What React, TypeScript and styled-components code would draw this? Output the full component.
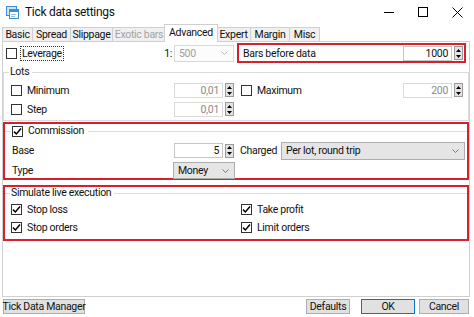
import React, { FC, ReactNode } from 'react'
import styled, { createGlobalStyle } from 'styled-components'

const GlobalStyle = createGlobalStyle`
  html, body {
    margin: 0;
    padding: 0;
    background: #ffffff;
  }
  body {
    font-family: Roboto, 'Noto Sans', sans-serif;
    font-size: 10.5px;
    letter-spacing: -0.3px;
    color: #111111;
  }
`

// window chrome
const Window = styled('div')`
  width: 474px;
  height: 317px;
  overflow: hidden;
  display: flex;
  flex-direction: column;
  background: #ffffff;
`
const TitleBar = styled('div')`
  height: 24px;
  display: flex;
  align-items: center;
  padding-left: 6px;
`
const TitleText = styled('span')`
  margin-left: 6px;
  font-size: 12px;
  flex-grow: 1;
`
const Controls = styled('div')`
  display: flex;
  height: 24px;
`
const ControlButton = styled('div')`
  width: 34px;
  height: 24px;
  display: flex;
  align-items: center;
  justify-content: center;
`

// tabs
const TabStrip = styled('div')`
  height: 17px;
  display: flex;
  align-items: flex-end;
  padding-left: 3px;
`
const Tab = styled('div')<{ $width: number; $active?: boolean; $disabled?: boolean }>`
  width: ${(p) => p.$width}px;
  box-sizing: border-box;
  height: ${(p) => (p.$active ? 18 : 14)}px;
  line-height: ${(p) => (p.$active ? 16 : 13)}px;
  text-align: center;
  margin: 0 ${(p) => (p.$active ? -1 : 0)}px -${(p) => (p.$active ? 1 : 0)}px;
  margin-left: ${(p) => (p.$active ? -2 : -1)}px;
  border: 1px solid #d0d0d0;
  border-bottom: none;
  background: ${(p) => (p.$active ? '#ffffff' : '#f0f0f0')};
  color: ${(p) => (p.$disabled ? '#a3a3a3' : '#111111')};
  position: relative;
  z-index: ${(p) => (p.$active ? 1 : 0)};
  white-space: nowrap;
`
const Panel = styled('div')`
  margin: 0 4px 0 2px;
  height: 256px;
  border: 1px solid #d0d0d0;
  display: flex;
  flex-direction: column;
  box-sizing: border-box;
`

// rows and cells
const TopRow = styled('div')`
  display: flex;
  align-items: center;
  height: 20px;
  margin-top: 1px;
`
const Cell = styled('div')<{ $width: number; $pad?: number }>`
  width: ${(p) => p.$width}px;
  flex-shrink: 0;
  box-sizing: border-box;
  padding-left: ${(p) => p.$pad || 0}px;
  display: flex;
  align-items: center;
`
const Push = styled('div')`
  flex-grow: 1;
`
const Highlight = styled('div')<{ $height: number }>`
  border: 2px solid #d8202c;
  height: ${(p) => p.$height}px;
  box-sizing: border-box;
  display: flex;
  flex-direction: column;
`
const Group = styled('fieldset')<{ $full?: boolean }>`
  margin: 0;
  padding: 0 0 0 6px;
  min-inline-size: 0;
  border: solid #dcdcdc;
  border-width: ${(p) => (p.$full ? '1px' : '1px 0 0 0')};
  display: flex;
  flex-direction: column;
`
const Legend = styled('legend')<{ $left: number }>`
  padding: 0 3px 0 1px;
  margin-left: ${(p) => p.$left}px;
  height: 12px;
  line-height: 12px;
  display: flex;
  align-items: center;
`
const Row = styled('div')<{ $height: number }>`
  display: flex;
  align-items: center;
  height: ${(p) => p.$height}px;
`
const Label = styled('span')<{ $dotted?: boolean }>`
  white-space: nowrap;
  outline: ${(p) => (p.$dotted ? '1px dotted #333' : 'none')};
  padding: 0 1px;
`

// controls
const Box = styled('span')`
  width: 11px;
  height: 11px;
  border: 1px solid #333333;
  box-sizing: border-box;
  background: #ffffff;
  margin-right: 4px;
  display: inline-flex;
  align-items: center;
  justify-content: center;
  flex-shrink: 0;
`
const CheckWrap = styled('span')`
  display: inline-flex;
  align-items: center;
`
const NumField = styled('div')<{ $width: number; $disabled?: boolean }>`
  width: ${(p) => p.$width}px;
  height: 15px;
  box-sizing: border-box;
  border: 1px solid ${(p) => (p.$disabled ? '#dadada' : '#c6c6c6')};
  background: #ffffff;
  color: ${(p) => (p.$disabled ? '#8a8a8a' : '#111111')};
  text-align: right;
  padding-right: 3px;
  line-height: 13px;
`
const Spin = styled('div')`
  width: 9px;
  height: 14px;
  margin-left: 2px;
  border: 1px solid #9a9a9a;
  box-sizing: border-box;
  background: #e3e3e3;
  display: flex;
  flex-direction: column;
  align-items: center;
  justify-content: space-around;
`
const Combo = styled('div')<{ $width: number; $disabled?: boolean }>`
  width: ${(p) => p.$width}px;
  flex-shrink: 0;
  height: 17px;
  box-sizing: border-box;
  border: 1px solid ${(p) => (p.$disabled ? '#d9d9d9' : '#adadad')};
  background: ${(p) => (p.$disabled ? '#fcfcfc' : '#e5e5e5')};
  color: ${(p) => (p.$disabled ? '#a0a0a0' : '#111111')};
  display: flex;
  align-items: center;
  padding: 0 5px 0 4px;
`
const ComboText = styled('span')`
  flex-grow: 1;
  white-space: nowrap;
`
const Footer = styled('div')`
  display: flex;
  align-items: center;
  padding: 2px 0 0 3px;
`
const Button = styled('div')<{ $width: number; $default?: boolean; $gap?: number }>`
  width: ${(p) => p.$width}px;
  height: 15px;
  box-sizing: border-box;
  margin-left: ${(p) => p.$gap || 0}px;
  border: 1px solid ${(p) => (p.$default ? '#0078d7' : '#adadad')};
  background: #e1e1e1;
  display: flex;
  align-items: center;
  justify-content: center;
  white-space: nowrap;
`

const Check: FC<{ checked?: boolean; children: ReactNode; dotted?: boolean }> = ({
  checked,
  children,
  dotted,
}) => (
  <CheckWrap>
    <Box>
      {checked && (
        <svg width="9" height="9" viewBox="0 0 9 9">
          <path d="M1 4.6 L3.4 7 L8 1.6" fill="none" stroke="#000" strokeWidth="1.5" />
        </svg>
      )}
    </Box>
    <Label $dotted={dotted}>{children}</Label>
  </CheckWrap>
)

const Spinner = () => (
  <Spin>
    <svg width="5" height="3" viewBox="0 0 5 3">
      <path d="M0 3 L2.5 0 L5 3 Z" fill="#000" />
    </svg>
    <svg width="5" height="3" viewBox="0 0 5 3">
      <path d="M0 0 L2.5 3 L5 0 Z" fill="#000" />
    </svg>
  </Spin>
)

const Chevron: FC<{ color: string }> = ({ color }) => (
  <svg width="7" height="4" viewBox="0 0 7 4">
    <path d="M0.5 0.5 L3.5 3.5 L6.5 0.5" fill="none" stroke={color} strokeWidth="1" />
  </svg>
)

const tabs = [
  { name: 'Basic', width: 31 },
  { name: 'Spread', width: 39 },
  { name: 'Slippage', width: 43 },
  { name: 'Exotic bars', width: 54, disabled: true },
  { name: 'Advanced', width: 54, active: true },
  { name: 'Expert', width: 35 },
  { name: 'Margin', width: 40 },
  { name: 'Misc', width: 31 },
]

const App: FC = () => (
  <Window>
    <GlobalStyle />
    <TitleBar>
      <svg width="13" height="13" viewBox="0 0 13 13">
        <rect x="0.5" y="0.5" width="10" height="9" fill="#cfe6f7" stroke="#3a8ed6" />
        <rect x="3.5" y="3.5" width="9" height="9" fill="#ffffff" stroke="#3a8ed6" />
        <rect x="4" y="4" width="8" height="2" fill="#3a8ed6" />
        <path d="M5 8.5 H10 M5 10.5 H9" stroke="#8fbde6" />
      </svg>
      <TitleText>Tick data settings</TitleText>
      <Controls>
        <ControlButton>
          <svg width="10" height="10" viewBox="0 0 10 10">
            <path d="M0 5.5 H10" stroke="#000" />
          </svg>
        </ControlButton>
        <ControlButton>
          <svg width="10" height="10" viewBox="0 0 10 10">
            <rect x="0.5" y="0.5" width="9" height="9" fill="none" stroke="#000" />
          </svg>
        </ControlButton>
        <ControlButton>
          <svg width="11" height="11" viewBox="0 0 11 11">
            <path d="M0.5 0.5 L10.5 10.5 M10.5 0.5 L0.5 10.5" stroke="#000" />
          </svg>
        </ControlButton>
      </Controls>
    </TitleBar>

    <TabStrip>
      {tabs.map((t) => (
        <Tab key={t.name} $width={t.width} $active={t.active} $disabled={t.disabled}>
          {t.name}
        </Tab>
      ))}
    </TabStrip>

    <Panel>
      <TopRow>
        <Cell $width={234} $pad={3}>
          <Check dotted>Leverage</Check>
          <Push />
          <Label>1:</Label>
          <Combo $width={60} $disabled style={{ marginLeft: 1, marginRight: 3 }}>
            <ComboText>500</ComboText>
            <Chevron color="#b8b8b8" />
          </Combo>
        </Cell>
        <Highlight $height={20} style={{ width: 229 }}>
          <Row $height={16} style={{ paddingLeft: 3 }}>
            <Label>Bars before data</Label>
            <Push />
            <NumField $width={49}>1000</NumField>
            <Spinner />
            <div style={{ width: 1 }} />
          </Row>
        </Highlight>
      </TopRow>

      <Group $full style={{ marginTop: 3, height: 53 }}>
        <Legend $left={-1}>Lots</Legend>
        <Row $height={16} style={{ marginTop: 4 }}>
          <Cell $width={224} $pad={1}>
            <Check>Minimum</Check>
            <Push />
            <NumField $width={49} $disabled>0,01</NumField>
            <Spinner />
          </Cell>
          <Cell $width={229} $pad={7}>
            <Check>Maximum</Check>
            <Push />
            <NumField $width={49} $disabled>200</NumField>
            <Spinner />
          </Cell>
        </Row>
        <Row $height={16} style={{ marginTop: 3 }}>
          <Cell $width={224} $pad={1}>
            <Check>Step</Check>
            <Push />
            <NumField $width={49} $disabled>0,01</NumField>
            <Spinner />
          </Cell>
        </Row>
      </Group>

      <Highlight $height={58} style={{ marginTop: 1 }}>
        <Group style={{ marginTop: 1 }}>
          <Legend $left={0}>
            <Check checked>Commission</Check>
          </Legend>
          <Row $height={17} style={{ marginTop: 5 }}>
            <Cell $width={223} $pad={0}>
              <Label>Base</Label>
              <Push />
              <NumField $width={49}>5</NumField>
              <Spinner />
            </Cell>
            <Label style={{ marginLeft: 5 }}>Charged</Label>
            <Push />
            <Combo $width={184} style={{ marginRight: 2, height: 18 }}>
              <ComboText>Per lot, round trip</ComboText>
              <Chevron color="#7a7a7a" />
            </Combo>
          </Row>
          <Row $height={17} style={{ marginTop: 3 }}>
            <Cell $width={224} $pad={0}>
              <Label>Type</Label>
              <Push />
              <Combo $width={62}>
                <ComboText>Money</ComboText>
                <Chevron color="#7a7a7a" />
              </Combo>
            </Cell>
          </Row>
        </Group>
      </Highlight>

      <Highlight $height={56} style={{ marginTop: 5 }}>
        <Group>
          <Legend $left={-1}>Simulate live execution</Legend>
          <Row $height={14} style={{ marginTop: 3 }}>
            <Cell $width={230} $pad={0}>
              <Check checked>Stop loss</Check>
            </Cell>
            <Check checked>Take profit</Check>
          </Row>
          <Row $height={14} style={{ marginTop: 4 }}>
            <Cell $width={230} $pad={0}>
              <Check checked>Stop orders</Check>
            </Cell>
            <Check checked>Limit orders</Check>
          </Row>
        </Group>
      </Highlight>
    </Panel>

    <Footer>
      <Button $width={82}>Tick Data Manager</Button>
      <Button $width={44} $gap={221}>Defaults</Button>
      <Button $width={54} $gap={11} $default>OK</Button>
      <Button $width={50} $gap={4}>Cancel</Button>
    </Footer>
  </Window>
)

export default App
